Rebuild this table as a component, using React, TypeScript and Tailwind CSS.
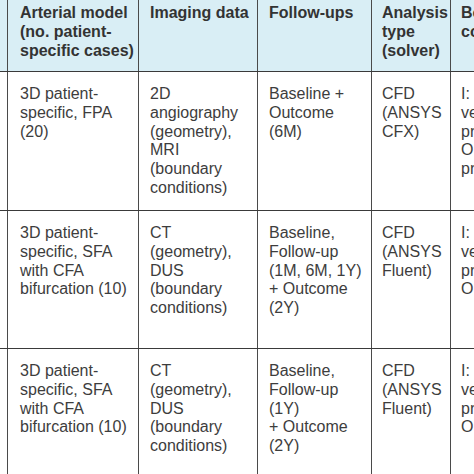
const header = [
  ['Arterial model', '(no. patient-', 'specific cases)'],
  ['Imaging data'],
  ['Follow-ups'],
  ['Analysis', 'type', '(solver)'],
  ['Boundary', 'conditions'],
];

const rows = [
  {
    h: 'h-[139px]',
    cells: [
      ['3D patient-', 'specific, FPA', '(20)'],
      ['2D', 'angiography', '(geometry),', 'MRI', '(boundary', 'conditions)'],
      ['Baseline +', 'Outcome', '(6M)'],
      ['CFD', '(ANSYS', 'CFX)'],
      ['I:', 'velocity', 'profile', 'O: zero', 'pressure'],
    ],
  },
  {
    h: 'h-[138px]',
    cells: [
      ['3D patient-', 'specific, SFA', 'with CFA', 'bifurcation (10)'],
      ['CT', '(geometry),', 'DUS', '(boundary', 'conditions)'],
      ['Baseline,', 'Follow-up', '(1M, 6M, 1Y)', '+ Outcome', '(2Y)'],
      ['CFD', '(ANSYS', 'Fluent)'],
      ['I:', 'velocity', 'profile', 'O: pressure'],
    ],
  },
  {
    h: 'h-[140px]',
    cells: [
      ['3D patient-', 'specific, SFA', 'with CFA', 'bifurcation (10)'],
      ['CT', '(geometry),', 'DUS', '(boundary', 'conditions)'],
      ['Baseline,', 'Follow-up', '(1Y)', '+ Outcome', '(2Y)'],
      ['CFD', '(ANSYS', 'Fluent)'],
      ['I:', 'velocity', 'profile', 'O: pressure'],
    ],
  },
];

// widths between the vertical rules (x = 7, 138, 257, 371, 450)
const widths = ['w-[131px]', 'w-[119px]', 'w-[114px]', 'w-[79px]', 'w-[140px]'];
const pads = ['pl-[12px]', 'pl-[11px]', 'pl-[11px]', 'pl-[10px]', 'pl-[10px]'];

function Lines({ lines }: { lines: string[] }) {
  return (
    <>
      {lines.map((l, i) => (
        <div key={i} className="whitespace-nowrap">
          {l}
        </div>
      ))}
    </>
  );
}

export default function App() {
  return (
    <div
      className="h-[474px] w-[474px] overflow-hidden bg-white text-[16px] leading-[18.8px] text-[#3d3d3d]"
      style={{ fontFamily: '"Liberation Sans", Arial, sans-serif' }}
    >
      <div className="flex h-[72px] w-[600px] border-b border-[#3a3a3a] bg-[#d9eef5] font-bold leading-[19px] text-[#333]">
        <div className="w-[7px] shrink-0" />
        {header.map((c, i) => (
          <div
            key={i}
            className={`${widths[i]} ${pads[i]} shrink-0 border-l border-[#4a4a4a] pt-[3px]`}
          >
            <Lines lines={c} />
          </div>
        ))}
      </div>
      {rows.map((r, ri) => (
        <div key={ri} className={`flex ${r.h} w-[600px] border-b border-[#3a3a3a]`}>
          <div className="w-[7px] shrink-0" />
          {r.cells.map((c, i) => (
            <div
              key={i}
              className={`${widths[i]} ${pads[i]} shrink-0 border-l border-[#4a4a4a] pt-[13px]`}
            >
              <Lines lines={c} />
            </div>
          ))}
        </div>
      ))}
    </div>
  );
}
